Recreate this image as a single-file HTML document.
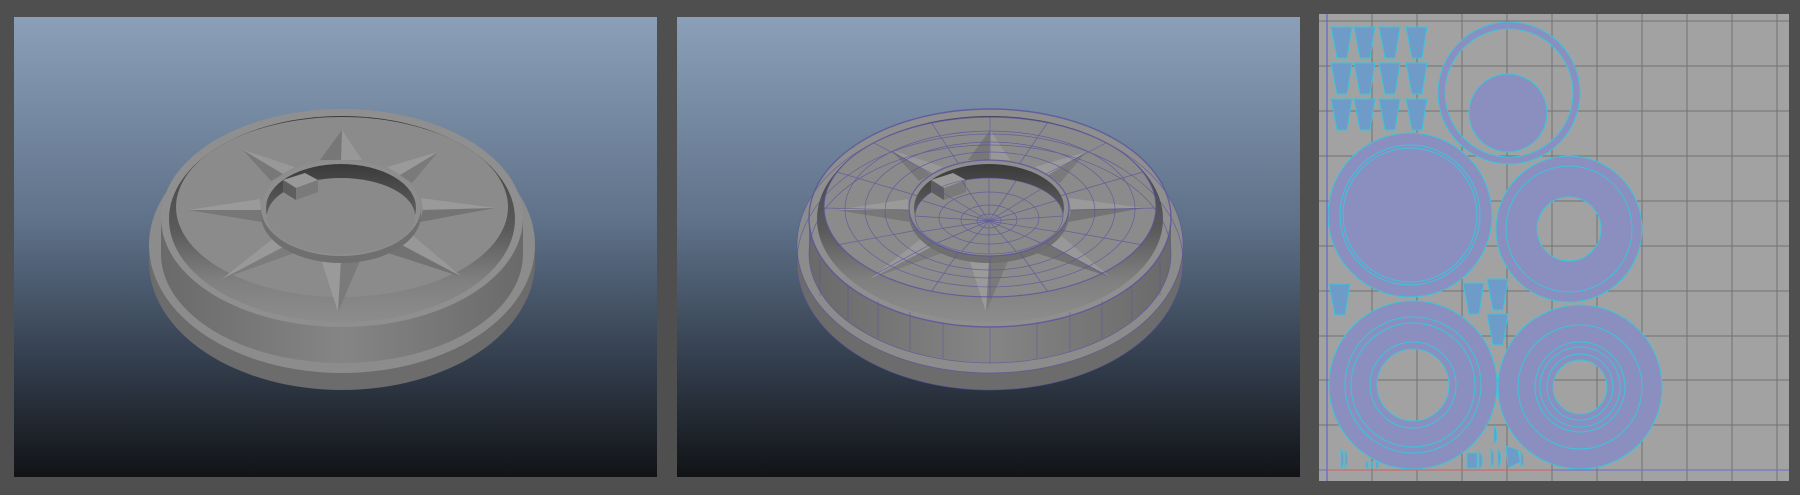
<!DOCTYPE html>
<html><head><meta charset="utf-8"><style>html,body{margin:0;padding:0;background:#4f4f4f;width:1800px;height:495px;overflow:hidden}</style></head>
<body>
<svg width="1800" height="495" viewBox="0 0 1800 495" xmlns="http://www.w3.org/2000/svg">
<defs>
<linearGradient id="sky" x1="0" y1="0" x2="0" y2="1">
<stop offset="0" stop-color="#8b9fb8"/><stop offset="0.45" stop-color="#5e7189"/><stop offset="0.75" stop-color="#333e4d"/><stop offset="1" stop-color="#111316"/></linearGradient>
<linearGradient id="side" x1="0" y1="0" x2="1" y2="0"><stop offset="0" stop-color="#6a6a6a"/><stop offset="0.5" stop-color="#858585"/><stop offset="1" stop-color="#6a6a6a"/></linearGradient>
<linearGradient id="cav" x1="0" y1="0" x2="0" y2="1"><stop offset="0" stop-color="#3a3a3a"/><stop offset="0.55" stop-color="#5a5a5a"/><stop offset="0.8" stop-color="#808080"/><stop offset="1" stop-color="#8c8c8c"/></linearGradient>
<linearGradient id="ringin" x1="0" y1="0" x2="0" y2="1"><stop offset="0" stop-color="#3a3a3a"/><stop offset="1" stop-color="#7a7a7a"/></linearGradient>
<polygon id="trap" points="0,0 21,0 16,31 6,31"/>
<g id="obj">
<ellipse cx="342" cy="262" rx="193" ry="128" fill="#6c6c6c"/>
<ellipse cx="342" cy="245" rx="193" ry="128" fill="#8c8c8c"/>
<ellipse cx="342" cy="254" rx="181" ry="109" fill="url(#side)"/>
<rect x="161" y="218" width="362" height="36" fill="url(#side)"/>
<ellipse cx="342" cy="218" rx="181" ry="109" fill="#8f8f8f"/>
<ellipse cx="342" cy="219" rx="173" ry="103" fill="url(#cav)"/>
<ellipse cx="342" cy="207" rx="166" ry="90" fill="#8b8b8b"/>
<g stroke="none">
<polygon points="342,130 362,160 341,160" fill="#989898"/><polygon points="342,130 341,160 320,160" fill="#777"/>
<polygon points="438,152 412,183 400,175" fill="#7a7a7a"/><polygon points="438,152 400,175 387,167" fill="#9a9a9a"/>
<polygon points="495,208 421,198 423,210" fill="#9a9a9a"/><polygon points="495,208 423,210 420,222" fill="#747474"/>
<polygon points="462,277 411,234 398,243" fill="#989898"/><polygon points="462,277 398,243 382,251" fill="#727272"/>
<polygon points="338,312 362,256 341,258" fill="#7a7a7a"/><polygon points="338,312 341,258 320,256" fill="#9a9a9a"/>
<polygon points="222,279 300,251 287,245" fill="#7c7c7c"/><polygon points="222,279 287,245 275,237" fill="#999"/>
<polygon points="188,210 262,222 261,210" fill="#777"/><polygon points="188,210 261,210 260,199" fill="#9a9a9a"/>
<polygon points="243,150 271,181 283,174" fill="#787878"/><polygon points="243,150 283,174 295,167" fill="#989898"/>
</g>
<ellipse cx="341" cy="215" rx="80" ry="48" fill="#6f6f6f"/>
<rect x="261" y="208" width="160" height="7" fill="#6f6f6f"/>
<ellipse cx="341" cy="208" rx="80" ry="48" fill="#8e8e8e"/>
<ellipse cx="341" cy="208" rx="75" ry="44" fill="url(#ringin)"/>
<ellipse cx="341" cy="216" rx="74" ry="38" fill="#8a8a8a"/>
<polygon points="283,180 305,173 318,180 296,188" fill="#999"/>
<polygon points="283,180 296,188 296,200 283,192" fill="#5e5e5e"/>
<polygon points="296,188 318,180 318,192 296,200" fill="#7a7a7a"/>
</g>
</defs>

<rect x="14" y="17" width="643" height="460" fill="url(#sky)"/>
<rect x="677" y="17" width="623" height="460" fill="url(#sky)"/>
<use href="#obj"/>
<use href="#obj" x="648"/>
<g transform="translate(648,0)" fill="none" stroke="#5650a0" stroke-width="0.7" opacity="0.75">
<ellipse cx="342" cy="218" rx="181" ry="109" stroke-width="1.4"/>
<ellipse cx="342" cy="245" rx="193" ry="128"/>
<ellipse cx="342" cy="254" rx="181" ry="109"/>
<ellipse cx="342" cy="262" rx="193" ry="128"/>
<ellipse cx="342" cy="207" rx="166" ry="90" stroke-width="1.2"/>
<ellipse cx="342" cy="209" rx="145" ry="78"/>
<ellipse cx="342" cy="210" rx="125" ry="68"/>
<ellipse cx="342" cy="211" rx="105" ry="59"/>
<ellipse cx="341" cy="208" rx="80" ry="48" stroke-width="1.2"/>
<ellipse cx="341" cy="216" rx="74" ry="38"/>
<ellipse cx="341" cy="218" rx="50" ry="26"/>
<ellipse cx="341" cy="220" rx="28" ry="15"/>
<ellipse cx="341" cy="221" rx="12" ry="7"/>
<g>
<line x1="341" y1="221" x2="415" y2="216"/><line x1="341" y1="221" x2="267" y2="216"/>
<line x1="341" y1="221" x2="341" y2="254"/><line x1="341" y1="221" x2="341" y2="178"/>
<line x1="341" y1="221" x2="393" y2="243"/><line x1="341" y1="221" x2="289" y2="243"/>
<line x1="341" y1="221" x2="393" y2="189"/><line x1="341" y1="221" x2="289" y2="189"/>
<line x1="341" y1="221" x2="410" y2="232"/><line x1="341" y1="221" x2="272" y2="232"/>
<line x1="341" y1="221" x2="410" y2="200"/><line x1="341" y1="221" x2="272" y2="200"/>
<line x1="341" y1="221" x2="368" y2="251"/><line x1="341" y1="221" x2="314" y2="251"/>
<line x1="341" y1="221" x2="368" y2="181"/><line x1="341" y1="221" x2="314" y2="181"/>
</g>
<g>
<line x1="421" y1="210" x2="508" y2="208"/><line x1="261" y1="210" x2="176" y2="208"/>
<line x1="342" y1="256" x2="342" y2="297"/><line x1="342" y1="160" x2="342" y2="117"/>
<line x1="398" y1="243" x2="458" y2="275"/><line x1="285" y1="243" x2="226" y2="275"/>
<line x1="398" y1="174" x2="458" y2="143"/><line x1="285" y1="174" x2="226" y2="143"/>
<line x1="412" y1="230" x2="495" y2="245"/><line x1="270" y1="230" x2="189" y2="245"/>
<line x1="412" y1="196" x2="495" y2="172"/><line x1="270" y1="196" x2="189" y2="172"/>
<line x1="372" y1="253" x2="400" y2="292"/><line x1="310" y1="253" x2="283" y2="292"/>
<line x1="372" y1="163" x2="400" y2="122"/><line x1="310" y1="163" x2="283" y2="122"/>
</g>
<g stroke-width="0.6">
<line x1="200" y1="285" x2="200" y2="320"/><line x1="230" y1="301" x2="230" y2="338"/><line x1="262" y1="312" x2="262" y2="350"/>
<line x1="295" y1="322" x2="295" y2="358"/><line x1="342" y1="327" x2="342" y2="363"/><line x1="389" y1="322" x2="389" y2="358"/>
<line x1="422" y1="312" x2="422" y2="350"/><line x1="454" y1="301" x2="454" y2="338"/><line x1="484" y1="285" x2="484" y2="320"/>
<line x1="172" y1="260" x2="172" y2="296"/><line x1="512" y1="260" x2="512" y2="296"/>
</g>
</g>

<rect x="1319" y="14" width="470" height="467" fill="#a2a2a2"/>
<g stroke="#727272" stroke-width="1">
<line x1="1319" y1="21" x2="1789" y2="21"/><line x1="1319" y1="66" x2="1789" y2="66"/><line x1="1319" y1="111" x2="1789" y2="111"/>
<line x1="1319" y1="156" x2="1789" y2="156"/><line x1="1319" y1="201" x2="1789" y2="201"/><line x1="1319" y1="246" x2="1789" y2="246"/>
<line x1="1319" y1="291" x2="1789" y2="291"/><line x1="1319" y1="336" x2="1789" y2="336"/><line x1="1319" y1="380" x2="1789" y2="380"/>
<line x1="1319" y1="425" x2="1789" y2="425"/>
<line x1="1372" y1="14" x2="1372" y2="481"/><line x1="1417" y1="14" x2="1417" y2="481"/><line x1="1462" y1="14" x2="1462" y2="481"/>
<line x1="1507" y1="14" x2="1507" y2="481"/><line x1="1552" y1="14" x2="1552" y2="481"/><line x1="1597" y1="14" x2="1597" y2="481"/>
<line x1="1642" y1="14" x2="1642" y2="481"/><line x1="1687" y1="14" x2="1687" y2="481"/><line x1="1732" y1="14" x2="1732" y2="481"/>
<line x1="1777" y1="14" x2="1777" y2="481"/>
</g>
<line x1="1327" y1="14" x2="1327" y2="481" stroke="#5a5ac8"/>
<line x1="1319" y1="470" x2="1789" y2="470" stroke="#6a6ad0"/>
<line x1="1327" y1="470" x2="1552" y2="470" stroke="#d06060"/>
<g fill="#8a8fc0" stroke="#3cc4dc" stroke-width="1">
<path fill-rule="evenodd" d="M1438,93a71,71 0 1,0 142,0a71,71 0 1,0 -142,0M1445,93a64,64 0 1,0 128,0a64,64 0 1,0 -128,0"/>
<circle cx="1508" cy="113" r="39"/>
<circle cx="1410" cy="215" r="82"/><circle cx="1410" cy="215" r="70" fill="none"/><circle cx="1410" cy="215" r="67" fill="none"/>
<path fill-rule="evenodd" d="M1496,229a73,73 0 1,0 146,0a73,73 0 1,0 -146,0M1537,229a32,32 0 1,0 64,0a32,32 0 1,0 -64,0"/>
<circle cx="1569" cy="229" r="63" fill="none"/>
<path fill-rule="evenodd" d="M1329,385a84,84 0 1,0 168,0a84,84 0 1,0 -168,0M1377,385a36,36 0 1,0 72,0a36,36 0 1,0 -72,0"/>
<circle cx="1413" cy="385" r="68" fill="none"/><circle cx="1413" cy="385" r="62" fill="none"/><circle cx="1413" cy="385" r="43" fill="none"/>
<path fill-rule="evenodd" d="M1498,387a82,82 0 1,0 164,0a82,82 0 1,0 -164,0M1553,387a27,27 0 1,0 54,0a27,27 0 1,0 -54,0"/>
<circle cx="1580" cy="387" r="62" fill="none"/><circle cx="1580" cy="387" r="45" fill="none"/><circle cx="1580" cy="387" r="40" fill="none"/><circle cx="1580" cy="387" r="33" fill="none"/>
</g>
<g fill="#6f9bc8" stroke="#3cc4dc" stroke-width="1">
<use href="#trap" x="1331" y="27"/><use href="#trap" x="1354" y="27"/><use href="#trap" x="1379" y="27"/><use href="#trap" x="1406" y="27"/>
<use href="#trap" x="1331" y="63"/><use href="#trap" x="1354" y="63"/><use href="#trap" x="1379" y="63"/><use href="#trap" x="1406" y="63"/>
<use href="#trap" x="1331" y="99"/><use href="#trap" x="1354" y="99"/><use href="#trap" x="1379" y="99"/><use href="#trap" x="1406" y="99"/>
<use href="#trap" x="1329" y="284"/><use href="#trap" x="1463" y="283"/><use href="#trap" x="1487" y="279"/><use href="#trap" x="1487" y="314"/>
</g>
<g fill="#6f9bc8" stroke="#3cc4dc" stroke-width="0.8">
<path d="M1341,449a6,12 0 0,1 0,20z"/><path d="M1345,451a5,10 0 0,1 0,17z"/>
<rect x="1366" y="462" width="2" height="6"/><rect x="1371" y="462" width="2" height="6"/><rect x="1376" y="462" width="2" height="6"/>
<rect x="1467" y="453" width="10" height="15"/><path d="M1479,452a5,9 0 0,1 0,17z"/>
<path d="M1494,426a5,10 0 0,1 0,18z"/><path d="M1491,449a5,10 0 0,1 0,18z"/><path d="M1498,449a5,10 0 0,1 0,18z"/>
<path d="M1506,446l12,4l2,12l-12,6z"/><path d="M1521,452a4,8 0 0,1 0,15z"/>
</g>
</svg>
</body></html>
